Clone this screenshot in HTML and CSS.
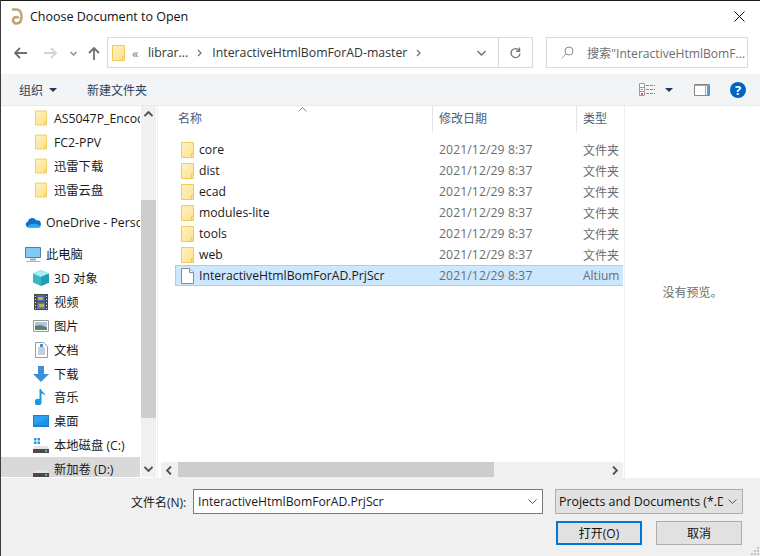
FILE: index.html
```html
<!DOCTYPE html>
<html lang="zh">
<head>
<meta charset="utf-8">
<title>Choose Document to Open</title>
<link rel="stylesheet" href="styles.css">
</head>
<body>
<svg class="defs" width="0" height="0">
  <defs>
    <linearGradient id="fg" x1="0" y1="0" x2="1" y2="1"><stop offset="0" stop-color="#fff3c4"/><stop offset="1" stop-color="#fde08a"/></linearGradient>
    <symbol id="folder" viewBox="0 0 13 16"><path d="M.5.5h12v15H.5z" fill="url(#fg)" stroke="#eecb5c"/><path d="M10.5 15.5v-4h2" fill="none" stroke="#eecb5c"/></symbol>
  </defs>
</svg>
<div class="window">
  <header class="titlebar">
    <svg class="appicon" width="12" height="17" viewBox="0 0 12 17"><path d="M1 1.500h4c3.500 0 5.500 2.500 5.500 7s-2 7-5 7c-2 0-3.500-1.200-3.500-3.200S3.500 9 5.500 9c1.200 0 1.800.6 2 1.500" fill="none" stroke="#bda675" stroke-width="2.600"/></svg>
    <span class="title">Choose Document to Open</span>
    <svg class="close" width="11" height="11" viewBox="0 0 11 11"><path d="M.5.5l10 10M10.500.5l-10 10" stroke="#111" fill="none"/></svg>
  </header>
  <nav class="navbar">
    <svg class="nav-back" width="13" height="12" viewBox="0 0 13 12"><path d="M6 1L1 6l5 5M1 6h12" fill="none" stroke="#6f6f6f" stroke-width="1.800"/></svg>
    <svg class="nav-fwd" width="13" height="12" viewBox="0 0 13 12"><path d="M7 1l5 5-5 5M12 6H0" fill="none" stroke="#d4d4d4" stroke-width="1.800"/></svg>
    <svg class="nav-down" width="7" height="5" viewBox="0 0 7 5"><path d="M.5 1l3 3 3-3" fill="none" stroke="#8a8a8a" stroke-width="1.300"/></svg>
    <svg class="nav-up" width="12" height="13" viewBox="0 0 12 13"><path d="M1 6l5-5 5 5M6 1v12" fill="none" stroke="#6f6f6f" stroke-width="1.800"/></svg>
    <div class="address">
      <svg class="addr-folder" width="13" height="16"><use href="#folder"/></svg>
      <span class="crumb-more">«</span>
      <span class="crumb crumb-lib">librar...</span>
      <svg class="sep" width="5" height="8" viewBox="0 0 5 8"><path d="M1 1l3 3-3 3" fill="none" stroke="#777" stroke-width="1.300"/></svg>
      <span class="crumb crumb-path">InteractiveHtmlBomForAD-master</span>
      <svg class="sep" width="5" height="8" viewBox="0 0 5 8"><path d="M1 1l3 3-3 3" fill="none" stroke="#777" stroke-width="1.300"/></svg>
      <svg class="addr-drop" width="9" height="6" viewBox="0 0 9 6"><path d="M.5 1l4 4 4-4" fill="none" stroke="#6d6d6d" stroke-width="1.400"/></svg>
      <div class="refresh">
        <svg width="11" height="12" viewBox="0 0 11 12"><path d="M9.500 4A4.500 4.500 0 1 0 10 6.500M9.500.5V4.200H6" fill="none" stroke="#7a7a7a" stroke-width="1.400"/></svg>
      </div>
    </div>
    <div class="search">
      <svg width="13" height="13" viewBox="0 0 13 13"><circle cx="8" cy="5" r="4" fill="none" stroke="#8c8c8c"/><path d="M5 8l-4.500 4.500" stroke="#b5a58f" fill="none"/></svg>
      <span class="search-text">搜索"InteractiveHtmlBomF...</span>
    </div>
  </nav>
  <div class="toolbar">
    <span class="tool">组织</span>
    <span class="caret caret-org"></span>
    <span class="tool tool-new">新建文件夹</span>
    <svg class="tb-view" width="16" height="13" viewBox="0 0 16 13"><path d="M.5.500h5v12h-5zM.5 4.500h5M.5 8.500h5" fill="#fff" stroke="#9c9c9c"/><path d="M7 2.500h9M7 6.500h9M7 10.500h9" stroke="#8e8e8e" stroke-dasharray="3 1"/><path d="M2 10h2v2H2z" fill="#d9534f"/><path d="M2 6h2v1H2z" fill="#5a9bd5"/></svg>
    <span class="caret caret-view"></span>
    <svg class="tb-pane" width="16" height="12" viewBox="0 0 16 12"><path d="M.5.500h15v11H.5z" fill="#fff" stroke="#858585"/><path d="M13 1h2v10h-2z" fill="#4a9fe0"/><path d="M.5 1.500h15" stroke="#a8a8a8"/><path d="M11.500 1v10" stroke="#a8a8a8"/></svg>
    <span class="help">?</span>
  </div>
  <main class="main">
    <aside class="tree">
      <div class="tree-rows">
        <div class="row sub"><svg width="12" height="16"><use href="#folder"/></svg><span>AS5047P_Encoder</span></div>
        <div class="row sub"><svg width="12" height="16"><use href="#folder"/></svg><span>FC2-PPV</span></div>
        <div class="row sub"><svg width="12" height="16"><use href="#folder"/></svg><span>迅雷下载</span></div>
        <div class="row sub"><svg width="12" height="16"><use href="#folder"/></svg><span>迅雷云盘</span></div>
        <div class="row top spaced">
          <svg width="16" height="11" viewBox="0 0 16 11"><path d="M3.500 10.500A3 3 0 0 1 3 4.600 4.500 4.500 0 0 1 11.500 3.500 3.500 3.500 0 0 1 13 10.500z" fill="#0f6fc6"/><path d="M3 10.500c0-3 3-4 5-3.500 2-1 7 0 7.500 3.500z" fill="#28a8ea"/></svg>
          <span>OneDrive - Personal</span>
        </div>
        <div class="row top spaced">
          <svg width="16" height="15" viewBox="0 0 16 15"><path d="M.5.500h15v10H.5z" fill="#7fcbf7" stroke="#5c7c99"/><path d="M5 12.500h6" stroke="#9aa8b5" stroke-width="2"/><path d="M1 14.500h14" stroke="#aab4be"/></svg>
          <span>此电脑</span>
        </div>
        <div class="row sub icon16">
          <svg width="16" height="16" viewBox="0 0 16 16"><path d="M8 0l8 3.500v9L8 16 0 12.500v-9z" fill="#3bb6c8"/><path d="M8 0l8 3.500L8 7 0 3.500z" fill="#a6ecf2"/><path d="M8 7l8-3.500v9L8 16z" fill="#1f9fb6"/></svg>
          <span>3D 对象</span>
        </div>
        <div class="row sub icon16">
          <svg width="14" height="16" viewBox="0 0 14 16"><path d="M0 0h14v16H0z" fill="#4a4a4a"/><path d="M3 1h8v6.500H3z" fill="#3d6fb5"/><path d="M3 8.500h8V15H3z" fill="#4f7fb5"/><path d="M4 3h5v3H4zM5 10h5v3H5z" fill="#d9a640"/><path d="M1 2h1v1H1zM1 5h1v1H1zM1 8h1v1H1zM1 11h1v1H1zM1 14h1v1H1zM12 2h1v1h-1zM12 5h1v1h-1zM12 8h1v1h-1zM12 11h1v1h-1zM12 14h1v1h-1z" fill="#ddd"/></svg>
          <span>视频</span>
        </div>
        <div class="row sub icon16">
          <svg width="16" height="12" viewBox="0 0 16 12"><path d="M.5.500h15v11H.5z" fill="#fff" stroke="#9a9a9a"/><path d="M2 2h12v4H2z" fill="#a9c6de"/><path d="M2 6c3-1 6-1 12 1v3H2z" fill="#5e7d6a"/></svg>
          <span>图片</span>
        </div>
        <div class="row sub icon16">
          <svg width="13" height="16" viewBox="0 0 13 16"><path d="M.5.500h8l4 4v11H.5z" fill="#fff" stroke="#9a9a9a"/><path d="M3 6h7M3 8h7M3 10h7M3 12h7" stroke="#8d9fb0"/><path d="M5 2h3v3H5z" fill="#4a90d0"/></svg>
          <span>文档</span>
        </div>
        <div class="row sub icon16 tight">
          <svg width="16" height="16" viewBox="0 0 16 16"><path d="M5 0h6v8h5l-8 8-8-8h5z" fill="#3d8fdc"/></svg>
          <span>下载</span>
        </div>
        <div class="row sub icon16">
          <svg width="12" height="16" viewBox="0 0 12 16"><path d="M4.500 0h1.500c.3 3 4 3.500 4.500 7-1-1.500-2.500-2.500-4-2.500v8A3.500 3.500 0 1 1 4.500 10z" fill="#1e96e8"/></svg>
          <span>音乐</span>
        </div>
        <div class="row sub icon16">
          <svg width="16" height="12" viewBox="0 0 16 12"><path d="M0 0h16v12H0z" fill="#1c7ed6"/><path d="M1 1h14v9H1z" fill="#29a3ef"/><path d="M1 10l14-7v7z" fill="#1f93e3"/></svg>
          <span>桌面</span>
        </div>
        <div class="row sub icon16">
          <svg width="16" height="16" viewBox="0 0 16 16"><path d="M1 1h2.500v2.500H1zM4.500 1H7v2.500H4.500zM1 4.500h2.500V7H1zM4.500 4.500H7V7H4.500z" fill="#1e9be8"/><path d="M2 9h12l2 3v4H0v-4z" fill="#e3e3e3"/><path d="M0 12h16v4H0z" fill="#4a4a4a"/><path d="M12 13h2v2h-2z" fill="#4fd04f"/></svg>
          <span>本地磁盘 (C:)</span>
        </div>
        <div class="row sub icon16 selected">
          <svg width="16" height="16" viewBox="0 0 16 16"><path d="M2 9h12l2 3v4H0v-4z" fill="#e3e3e3"/><path d="M0 12h16v4H0z" fill="#4a4a4a"/><path d="M12 13h2v2h-2z" fill="#4fd04f"/></svg>
          <span>新加卷 (D:)</span>
        </div>
      </div>
    </aside>
    <div class="vscroll">
      <svg class="arrow" width="9" height="6" viewBox="0 0 9 6"><path d="M.5 5l4-4 4 4" fill="none" stroke="#505050" stroke-width="1.800"/></svg>
      <div class="vtrack"><div class="vthumb"></div></div>
      <svg class="arrow" width="9" height="6" viewBox="0 0 9 6"><path d="M.5 1l4 4 4-4" fill="none" stroke="#505050" stroke-width="1.800"/></svg>
    </div>
    <section class="list">
      <div class="list-head">
        <svg class="sort" width="9" height="5" viewBox="0 0 9 5"><path d="M.5 4.500l4-4 4 4" fill="none" stroke="#8f8f8f"/></svg>
        <div class="hcell hname">名称</div>
        <div class="hcell hdate">修改日期</div>
        <div class="hcell htype">类型</div>
      </div>
      <div class="list-body">
        <div class="file"><svg width="13" height="16"><use href="#folder"/></svg><span class="fname">core</span><span class="fdate">2021/12/29 8:37</span><span class="ftype">文件夹</span></div>
        <div class="file"><svg width="13" height="16"><use href="#folder"/></svg><span class="fname">dist</span><span class="fdate">2021/12/29 8:37</span><span class="ftype">文件夹</span></div>
        <div class="file"><svg width="13" height="16"><use href="#folder"/></svg><span class="fname">ecad</span><span class="fdate">2021/12/29 8:37</span><span class="ftype">文件夹</span></div>
        <div class="file"><svg width="13" height="16"><use href="#folder"/></svg><span class="fname">modules-lite</span><span class="fdate">2021/12/29 8:37</span><span class="ftype">文件夹</span></div>
        <div class="file"><svg width="13" height="16"><use href="#folder"/></svg><span class="fname">tools</span><span class="fdate">2021/12/29 8:37</span><span class="ftype">文件夹</span></div>
        <div class="file"><svg width="13" height="16"><use href="#folder"/></svg><span class="fname">web</span><span class="fdate">2021/12/29 8:37</span><span class="ftype">文件夹</span></div>
        <div class="file active"><svg width="13" height="16" viewBox="0 0 13 16"><path d="M.5.500h8l4 4v11H.5z" fill="#fff" stroke="#8a8a8a"/><path d="M8.500.500v4h4" fill="#eee" stroke="#8a8a8a"/></svg><span class="fname">InteractiveHtmlBomForAD.PrjScr</span><span class="fdate">2021/12/29 8:37</span><span class="ftype">Altium</span></div>
      </div>
      <div class="hscroll">
        <svg width="6" height="9" viewBox="0 0 6 9"><path d="M5 .5l-4 4 4 4" fill="none" stroke="#505050" stroke-width="1.800"/></svg>
        <div class="htrack"><div class="hthumb"></div></div>
        <svg width="6" height="9" viewBox="0 0 6 9"><path d="M1 .5l4 4-4 4" fill="none" stroke="#505050" stroke-width="1.800"/></svg>
      </div>
    </section>
    <aside class="preview">没有预览。</aside>
  </main>
  <footer class="footer">
    <div class="name-line">
      <label class="name-label">文件名(N):</label>
      <div class="name-input">
        <span class="name-value">InteractiveHtmlBomForAD.PrjScr</span>
        <svg width="9" height="5" viewBox="0 0 9 5"><path d="M.5.500l4 4 4-4" fill="none" stroke="#555"/></svg>
      </div>
      <div class="type-select">
        <span class="type-value">Projects and Documents (*.DOC)</span>
        <svg width="9" height="5" viewBox="0 0 9 5"><path d="M.5.500l4 4 4-4" fill="none" stroke="#555"/></svg>
      </div>
    </div>
    <div class="btn-line">
      <button class="btn primary">打开(O)</button>
      <button class="btn">取消</button>
    </div>
    <svg class="grip" width="9" height="9" viewBox="0 0 9 9"><path d="M7 1h2v2H7zM4 4h2v2H4zM7 4h2v2H7zM1 7h2v2H1zM4 7h2v2H4zM7 7h2v2H7z" fill="#c4c4c4"/></svg>
  </footer>
</div>
</body>
</html>
```
FILE: styles.css
```css
* { box-sizing: border-box; }
html, body { margin: 0; padding: 0; }
body {
  width: 760px;
  height: 556px;
  overflow: hidden;
  font-family: "Open Sans", "Noto Sans CJK SC", sans-serif;
  font-size: 12px;
  color: #1a1a1a;
  background: #fff;
}
.defs { position: absolute; }
svg { display: block; flex: none; }
.window {
  width: 760px;
  height: 556px;
  border-top: 1px solid #1c1c1c;
  border-left: 1px solid #3c3c3c;
  display: flex;
  flex-direction: column;
  position: relative;
}
.titlebar {
  height: 31px;
  display: flex;
  align-items: center;
  padding-left: 10px;
  padding-right: 15px;
}
.title { margin-left: 7px; font-size: 12.5px; color: #111; }
.close { margin-left: auto; }
.navbar {
  height: 42px;
  display: flex;
  align-items: center;
}
.nav-back { margin-left: 13px; }
.nav-fwd { margin-left: 17px; }
.nav-down { margin-left: 13px; }
.nav-up { margin-left: 11px; }
.address {
  margin-left: 7px;
  width: 426px;
  height: 31px;
  margin-top: -1px;
  border: 1px solid #d9d9d9;
  display: flex;
  align-items: center;
  padding-left: 4px;
}
.crumb-more { margin-left: 7px; color: #7a7a7a; font-size: 13px; width: 16px; }
.crumb { font-size: 12.3px; color: #333; white-space: nowrap; }
.sep { margin-left: 9px; margin-right: 10px; }
.crumb-path + .sep { margin-left: 9px; margin-right: 0; }
.addr-drop { margin-left: 56px; }
.refresh {
  margin-left: auto;
  width: 34px;
  height: 100%;
  border-left: 1px solid #d9d9d9;
  display: flex;
  align-items: center;
  justify-content: center;
}
.search {
  margin-left: 13px;
  width: 202px;
  height: 31px;
  margin-top: -1px;
  border: 1px solid #d9d9d9;
  display: flex;
  align-items: center;
  padding-left: 14px;
  gap: 13px;
}
.search-text { color: #6d6d6d; font-size: 12.1px; white-space: nowrap; }
.toolbar {
  height: 32px;
  background: #f3f4f6;
  border-bottom: 1px solid #e9eaec;
  display: flex;
  align-items: center;
}
.tool { font-size: 12px; color: #2d4159; }
.toolbar > .tool:first-child { margin-left: 18px; }
.tool-new { margin-left: 30px; }
.caret { width: 0; height: 0; border-left: 4px solid transparent; border-right: 4px solid transparent; border-top: 4px solid #1e3a5f; }
.caret-org { margin-left: 6px; }
.tb-view { margin-left: auto; }
.caret-view { margin-left: 10px; }
.tb-pane { margin-left: 21px; }
.help {
  margin-left: 20px;
  margin-right: 14px;
  width: 16px;
  height: 16px;
  border-radius: 50%;
  background: #0067c0;
  color: #fff;
  font-weight: 700;
  font-size: 13px;
  line-height: 16px;
  text-align: center;
}
.main { flex: 1; display: flex; min-height: 0; height: 371px; }
.tree { width: 139px; margin-right: 1px; overflow: hidden; height: 371px; flex: none; }
.tree-rows { display: flex; flex-direction: column; }
.row {
  height: 24px;
  flex: none;
  display: flex;
  align-items: center;
  white-space: nowrap;
  overflow: hidden;
}
.row span { font-size: 12.3px; }
.row.sub { padding-left: 34px; gap: 7px; }
.row.sub.icon16 { padding-left: 32px; display: grid; grid-template-columns: 16px 1fr; gap: 5px; justify-items: center; }
.row.sub.icon16 span { justify-self: start; }
.row.top { padding-left: 24px; gap: 5px; }
.spaced { margin-top: 8px; }
.row.tight { height: 23px; }
.row.selected { background: #d9d9d9; }
.vscroll {
  width: 15px;
  flex: none;
  background: #f0f0f0;
  display: flex;
  flex-direction: column;
  align-items: center;
  padding: 5px 0;
  height: 371px;
}
.vtrack { flex: 1; width: 100%; padding-top: 80px; margin: 3px 0; }
.vthumb { height: 218px; background: #cdcdcd; }
.list {
  width: 467px;
  flex: none;
  margin-left: 1px;
  padding-left: 2px;
  border-left: 1px solid #f0f0f0;
  display: flex;
  flex-direction: column;
  position: relative;
}
.list-head { height: 27px; display: flex; flex: none; position: relative; color: #4c607a; }
.sort { position: absolute; left: 138px; top: 1px; }
.hcell { flex: none; font-size: 12px; display: flex; align-items: center; padding-left: 6px; border-right: 1px solid #e5e5e5; height: 27px; padding-bottom: 3px; }
.hname { width: 273px; padding-left: 18px; }
.hdate { width: 144px; }
.htype { width: 47px; border-right: 0; }
.list-body { flex: 1; padding: 6px 0 0 15px; }
.file {
  width: 448px;
  height: 21px;
  display: grid;
  grid-template-columns: 18px 240px 144px 1fr;
  align-items: center;
  padding-left: 6px;
  border: 1px solid transparent;
  border-left-width: 0;
  border-right-width: 0;
  white-space: nowrap;
  overflow: hidden;
}
.file.active { background: #cce8ff; border-color: #99d1ff; border-left-width: 1px; padding-left: 5px; }
.fname { font-size: 12.2px; color: #1a1a1a; }
.fdate { font-size: 12.2px; letter-spacing: .1px; color: #6d6d6d; }
.ftype { font-size: 12px; color: #6d6d6d; }
.hscroll {
  height: 16px;
  flex: none;
  background: #f0f0f0;
  display: flex;
  align-items: center;
  padding: 0 5px;
  margin-left: 1px;
  width: 462px;
}
.htrack { flex: 1; padding: 0 0 0 6px; height: 16px; }
.hthumb { width: 316px; height: 15px; background: #cdcdcd; }
.preview {
  flex: 1;
  border-left: 1px solid #f0f0f0;
  display: flex;
  align-items: center;
  justify-content: center;
  color: #6d6d6d;
  font-size: 12px;
}
.footer {
  height: 78px;
  flex: none;
  background: #f0f0f0;
  position: relative;
  padding-top: 11px;
}
.name-line { display: flex; align-items: center; height: 25px; }
.name-label { margin-left: 130px; width: 62px; font-size: 12px; color: #1a1a1a; }
.name-input {
  width: 350px;
  height: 25px;
  background: #fff;
  border: 1px solid #7a7a7a;
  display: flex;
  align-items: center;
  padding: 0 5px 0 4px;
  justify-content: space-between;
}
.name-value { color: #1a1a1a; font-size: 12.2px; }
.type-select {
  margin-left: 12px;
  width: 188px;
  height: 25px;
  background: #e1e1e1;
  border: 1px solid #adadad;
  display: flex;
  align-items: center;
  padding: 0 5px 0 3px;
  justify-content: space-between;
}
.type-value { width: 164px; overflow: hidden; white-space: nowrap; font-size: 12.4px; color: #111; }
.btn-line { display: flex; gap: 14px; margin-top: 7px; padding-left: 555px; }
.btn {
  width: 86px;
  height: 24px;
  background: #e1e1e1;
  border: 1px solid #adadad;
  padding: 0;
  font-family: inherit;
  font-size: 12px;
  color: #111;
}
.btn.primary { border: 2px solid #0078d7; }
.grip { position: absolute; right: 1px; bottom: 1px; }
```
